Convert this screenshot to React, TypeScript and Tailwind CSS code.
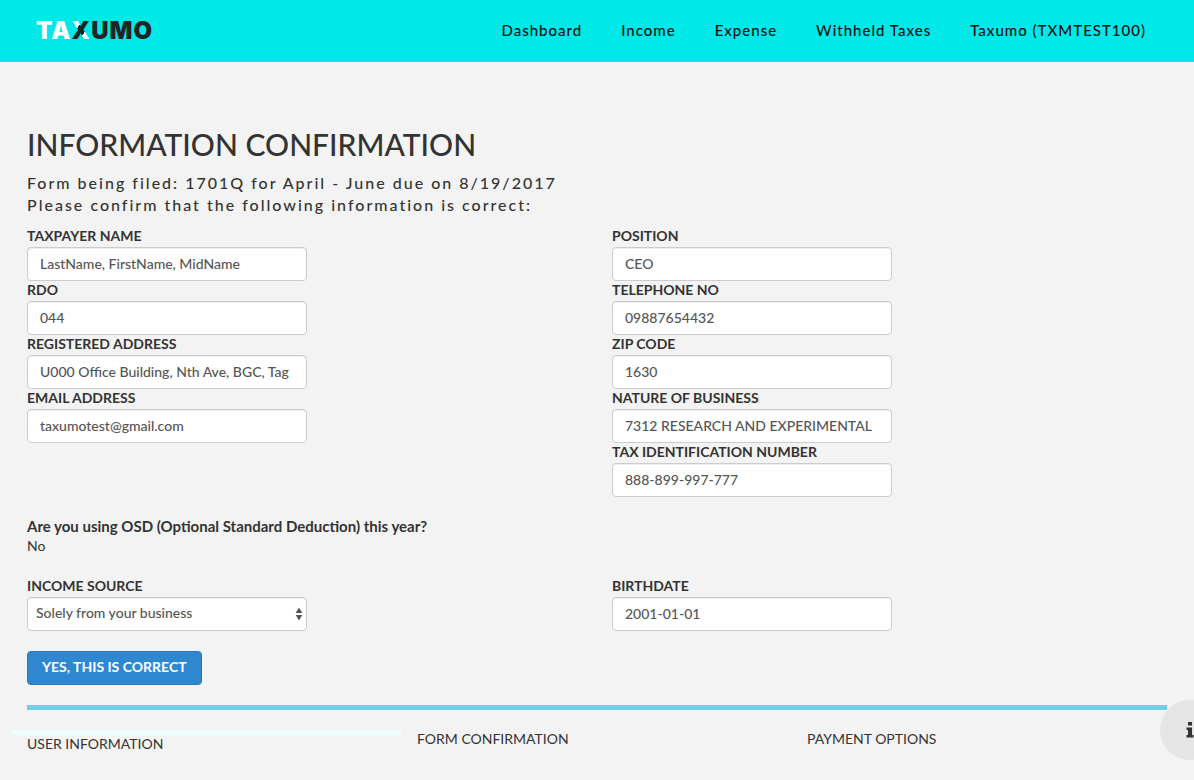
import * as React from 'react';

interface FieldProps {
    id: string;
    label: string;
    value: string;
    type?: string;
}

const NAV_ITEMS = ['Dashboard', 'Income', 'Expense', 'Withheld Taxes', 'Taxumo (TXMTEST100)'];

const LEFT_FIELDS: FieldProps[] = [
    {id: 'taxpayer-name', label: 'TAXPAYER NAME', value: 'LastName, FirstName, MidName'},
    {id: 'rdo', label: 'RDO', value: '044'},
    {id: 'address', label: 'REGISTERED ADDRESS', value: 'U000 Office Building, Nth Ave, BGC, Tag'},
    {id: 'email', label: 'EMAIL ADDRESS', value: 'taxumotest@gmail.com', type: 'email'},
];

const RIGHT_FIELDS: FieldProps[] = [
    {id: 'position', label: 'POSITION', value: 'CEO'},
    {id: 'telephone', label: 'TELEPHONE NO', value: '09887654432', type: 'tel'},
    {id: 'zip', label: 'ZIP CODE', value: '1630'},
    {id: 'business', label: 'NATURE OF BUSINESS', value: '7312 RESEARCH AND EXPERIMENTAL'},
    {id: 'tin', label: 'TAX IDENTIFICATION NUMBER', value: '888-899-997-777'},
];

function Field({id, label, value, type = 'text'}: FieldProps) {
    return (
        <div className="flex flex-col items-start">
            <label htmlFor={id} className="h-5 leading-[18px] font-bold">{label}</label>
            <input
                id={id}
                type={type}
                defaultValue={value}
                className="h-[34px] w-[280px] max-w-full rounded border border-[#ccc] bg-white px-3 pb-0.5 font-medium text-[#555] shadow-[inset_0_1px_1px_rgba(0,0,0,0.075)]"
            />
        </div>
    );
}

function Logo() {
    return (
        <a href="#" aria-label="Taxumo" className="flex pt-0.5 font-['Inter',sans-serif] text-2xl leading-[30px] font-black tracking-[1px] text-[#1f2426]">
            <span className="text-white">TA</span>
            <span className="bg-[linear-gradient(125deg,#fff_36%,#1f2426_36%,#1f2426_61%,#fff_61%)] bg-clip-text text-transparent">X</span>
            <span>UMO</span>
        </a>
    );
}

export default function App() {
    return (
        <div className="min-h-screen overflow-x-hidden bg-[#f3f3f3] font-['Lato',sans-serif] text-sm leading-5 text-[#333]">
            <header className="flex h-[62px] items-center justify-between bg-[#00e8e8] pr-12 pb-0.5 pl-9">
                <Logo />
                <nav className="flex gap-[39px] text-[15px] font-medium tracking-[1px] text-[#111]">
                    {NAV_ITEMS.map(item => <a key={item} href="#">{item}</a>)}
                </nav>
            </header>

            <main className="mx-auto max-w-[1170px] px-[15px] pt-[66px]">
                <h1 className="mb-[11px] text-[30px] leading-[33px] font-medium">INFORMATION CONFIRMATION</h1>
                <p className="mb-[11px] text-base leading-[22px] font-medium tracking-[2px]">
                    Form being filed: 1701Q for April - June due on 8/19/2017<br />
                    Please confirm that the following information is correct:
                </p>

                <form onSubmit={e => e.preventDefault()}>
                    <div className="grid grid-cols-2 gap-x-[30px]">
                        <div>{LEFT_FIELDS.map(f => <Field key={f.id} {...f} />)}</div>
                        <div>{RIGHT_FIELDS.map(f => <Field key={f.id} {...f} />)}</div>
                    </div>

                    <div className="mt-[19px] mb-[21px]">
                        <p className="text-[15px] leading-5 font-bold">Are you using OSD (Optional Standard Deduction) this year?</p>
                        <p>No</p>
                    </div>

                    <div className="grid grid-cols-2 gap-x-[30px]">
                        <div className="flex flex-col items-start">
                            <label htmlFor="income-source" className="h-5 leading-[18px] font-bold">INCOME SOURCE</label>
                            <div className="relative w-[280px] max-w-full">
                                <select
                                    id="income-source"
                                    className="block h-[34px] w-full appearance-none rounded border border-[#ccc] bg-white px-2 pb-0.5 font-medium text-[#555] shadow-[inset_0_1px_1px_rgba(0,0,0,0.075)]"
                                >
                                    <option>Solely from your business</option>
                                </select>
                                <svg className="pointer-events-none absolute top-[10px] right-1 h-[14px] w-2" viewBox="0 0 8 14" fill="#555">
                                    <path d="M4 0.5 7.3 6H0.7zM4 13.5 0.7 8h6.6z" />
                                </svg>
                            </div>
                        </div>
                        <Field id="birthdate" label="BIRTHDATE" value="2001-01-01" />
                    </div>

                    <button type="submit" className="mt-5 h-[34px] rounded border border-[#2a78b5] bg-[#2f88cf] px-3.5 pb-0.5 font-bold text-white">
                        YES, THIS IS CORRECT
                    </button>
                </form>

                <hr className="my-5 border-t-[5px] border-[#73cee8]" />

                <ol className="-mx-[15px] grid grid-cols-3 leading-[18px]">
                    <li className="border-t-[5px] border-[#edfdfd] px-[15px]">USER INFORMATION</li>
                    <li className="px-[15px]">FORM CONFIRMATION</li>
                    <li className="px-[15px]">PAYMENT OPTIONS</li>
                </ol>
            </main>

            <button
                type="button"
                aria-label="Help"
                className="fixed -right-[26px] bottom-5 flex size-[60px] items-center justify-center rounded-full bg-[#e5e5e5]"
            >
                <svg className="h-4 w-2" viewBox="0 0 8 16" fill="#333">
                    <path d="M2 0h4v3.5H2zM0.5 5.5H6V13h1.5v2.5h-7V13H2V8H0.5z" />
                </svg>
            </button>
        </div>
    );
}
